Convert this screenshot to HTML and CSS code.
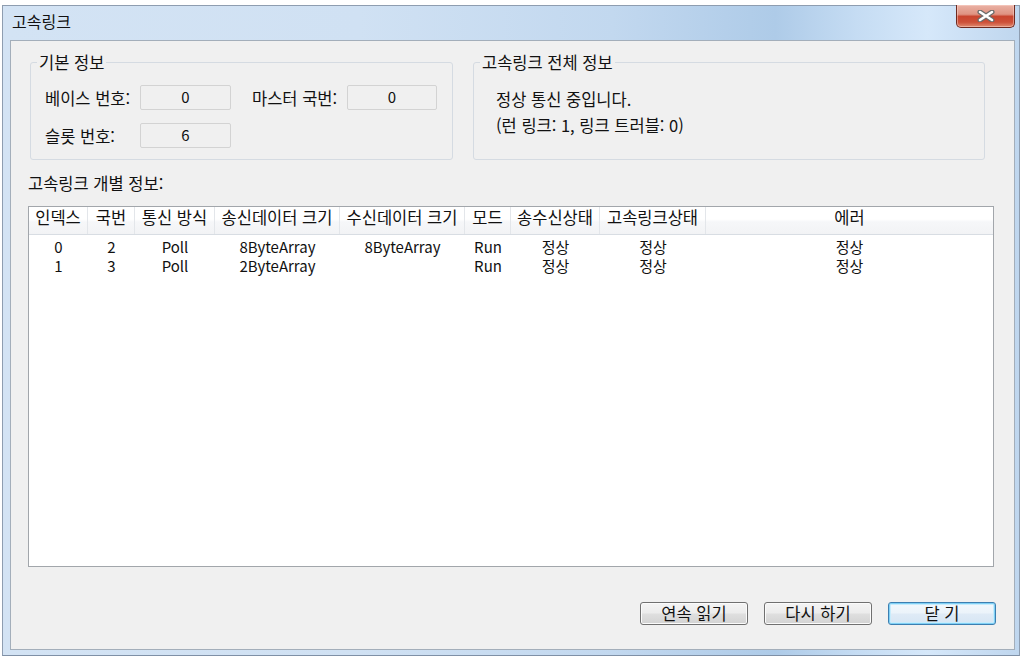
FILE: index.html
```html
<!DOCTYPE html>
<html lang="ko">
<head>
<meta charset="utf-8">
<title>고속링크</title>
<link rel="stylesheet" href="styles.css">
</head>
<body>
<div class="window">
  <div class="titlebar">
    <span class="title">고속링크</span>
    <button class="close-btn" aria-label="닫기">
      <svg width="18" height="12" viewBox="0 0 18 12">
        <path d="M3 2 L15 10 M15 2 L3 10" stroke="#6b6b6b" stroke-width="5" stroke-linecap="round" fill="none"/>
        <path d="M3 2 L15 10 M15 2 L3 10" stroke="#ffffff" stroke-width="2.6" stroke-linecap="round" fill="none"/>
      </svg>
    </button>
  </div>
  <div class="client">
    <div class="groups">
      <fieldset class="group group-basic">
        <legend>기본 정보</legend>
        <div class="group-body basic-body">
          <div class="field-row">
            <span class="label">베이스 번호:</span><span class="value">0</span>
            <span class="label label-2">마스터 국번:</span><span class="value value-2">0</span>
          </div>
          <div class="field-row">
            <span class="label">슬롯 번호:</span><span class="value">6</span>
          </div>
        </div>
      </fieldset>
      <fieldset class="group group-status">
        <legend>고속링크 전체 정보</legend>
        <div class="group-body status-body">
          <p class="status-line">정상 통신 중입니다.</p>
          <p class="status-line">(런 링크: 1, 링크 트러블: 0)</p>
        </div>
      </fieldset>
    </div>

    <div class="section-label">고속링크 개별 정보:</div>

    <div class="listview">
      <div class="lv-header">
        <div class="lv-hcell">인덱스</div>
        <div class="lv-hcell">국번</div>
        <div class="lv-hcell">통신 방식</div>
        <div class="lv-hcell">송신데이터 크기</div>
        <div class="lv-hcell">수신데이터 크기</div>
        <div class="lv-hcell">모드</div>
        <div class="lv-hcell">송수신상태</div>
        <div class="lv-hcell">고속링크상태</div>
        <div class="lv-hcell">에러</div>
      </div>
      <div class="lv-body">
        <div class="lv-row">
          <div class="lv-cell">0</div>
          <div class="lv-cell">2</div>
          <div class="lv-cell">Poll</div>
          <div class="lv-cell">8ByteArray</div>
          <div class="lv-cell">8ByteArray</div>
          <div class="lv-cell">Run</div>
          <div class="lv-cell">정상</div>
          <div class="lv-cell">정상</div>
          <div class="lv-cell">정상</div>
        </div>
        <div class="lv-row">
          <div class="lv-cell">1</div>
          <div class="lv-cell">3</div>
          <div class="lv-cell">Poll</div>
          <div class="lv-cell">2ByteArray</div>
          <div class="lv-cell"></div>
          <div class="lv-cell">Run</div>
          <div class="lv-cell">정상</div>
          <div class="lv-cell">정상</div>
          <div class="lv-cell">정상</div>
        </div>
      </div>
    </div>

    <div class="buttons">
      <button class="btn">연속 읽기</button>
      <button class="btn">다시 하기</button>
      <button class="btn btn-default">닫 기</button>
    </div>
  </div>
</div>
</body>
</html>
```

FILE: styles.css
```css
* {
  box-sizing: border-box;
}

html, body {
  margin: 0;
  padding: 0;
  background: #ffffff;
}

body {
  font-family: "Noto Sans CJK KR", "Noto Sans", sans-serif;
  font-size: 16.5px;
  color: #111;
  width: 1025px;
  height: 659px;
  overflow: hidden;
}

.window {
  margin: 5px 0 0 2px;
  width: 1018px;
  height: 651px;
  border: 1px solid #8e9db0;
  border-bottom-color: #7f90a6;
  background: linear-gradient(90deg, #d3e3f4 0%, #d0e1f3 35%, #c2d8ef 60%, #aecbe8 76%, #c5dcf3 84%, #d6e8fa 91%, #bfd6ee 100%);
  display: flex;
  flex-direction: column;
  padding: 0 4px 5px 7px;
}

.titlebar {
  height: 34px;
  display: flex;
  align-items: flex-start;
  flex: none;
}

.title {
  margin-top: 5px;
  margin-left: 2px;
  line-height: 20px;
  font-size: 16px;
}

.close-btn {
  margin-left: auto;
  margin-right: 0;
  margin-top: -1px;
  width: 59px;
  height: 23px;
  padding: 0;
  border: 1px solid #6e2a20;
  border-top: none;
  border-radius: 0 0 5px 5px;
  background: linear-gradient(180deg, #eab2a5 0%, #df9382 42%, #c9452f 52%, #cd5038 78%, #e08b70 100%);
  box-shadow: inset 0 0 0 1px rgba(255, 220, 210, 0.45);
  display: flex;
  align-items: center;
  justify-content: center;
}

.close-btn svg {
  display: block;
}

.client {
  flex: 1;
  border: 1px solid #a3aeba;
  background: #f0f0f0;
  display: flex;
  flex-direction: column;
  padding: 12px 20px 24px 17px;
}

.groups {
  display: flex;
  gap: 20px;
  margin-left: 2px;
  flex: none;
}

.group {
  margin: 0;
  padding: 0;
  min-width: 0;
  border: 1px solid #d5dbe2;
  border-radius: 3px;
}

.group legend {
  margin-left: 6px;
  padding: 0 2px;
  line-height: 18px;
}

.group-basic {
  width: 423px;
}

.group-status {
  width: 512px;
}

.basic-body {
  padding: 14px 0 11px 14px;
  display: flex;
  flex-direction: column;
  gap: 13px;
}

.field-row {
  display: flex;
  align-items: center;
}

.label {
  width: 95px;
  line-height: 20px;
  white-space: nowrap;
}

.label-2 {
  margin-left: 21px;
}

.value {
  width: 91px;
  height: 25px;
  border: 1px solid #d3d3d3;
  border-radius: 2px;
  background: #f0f0f0;
  text-align: center;
  font-size: 15px;
  line-height: 21px;
  padding-bottom: 2px;
}

.value-2 {
  width: 90px;
}

.status-body {
  padding: 15px 0 0 22px;
}

.status-line {
  margin: 0;
  line-height: 26px;
}

.section-label {
  margin-top: 14px;
  line-height: 18px;
  flex: none;
}

.listview {
  margin-top: 14px;
  flex: 1;
  border: 1px solid #a2a6ab;
  background: #ffffff;
  display: flex;
  flex-direction: column;
  --cols: 59px 47px 80px 125px 125px 46px 89px 106px 1fr;
}

.lv-header {
  display: grid;
  grid-template-columns: var(--cols);
  border-bottom: 1px solid #d8dde3;
  background: linear-gradient(180deg, #ffffff 0%, #ffffff 45%, #f6f7f9 55%, #f2f3f5 100%);
}

.lv-hcell {
  text-align: center;
  line-height: 21px;
  padding-bottom: 6px;
  border-right: 1px solid #e3e6ea;
  white-space: nowrap;
}

.lv-hcell:last-child {
  border-right: none;
}

.lv-body {
  padding-top: 2px;
}

.lv-row {
  display: grid;
  grid-template-columns: var(--cols);
}

.lv-cell {
  text-align: center;
  font-size: 15px;
  line-height: 19px;
  white-space: nowrap;
}

.buttons {
  margin-top: 35px;
  margin-right: -2px;
  display: flex;
  justify-content: flex-end;
  gap: 16px;
  flex: none;
}

.btn {
  width: 108px;
  height: 23px;
  padding: 0;
  font-family: "Noto Sans CJK KR", "Noto Sans", sans-serif;
  font-size: 16.5px;
  line-height: 19px;
  color: #111;
  border: 1px solid #707070;
  border-radius: 3px;
  background: linear-gradient(180deg, #f4f4f4 0%, #ececec 48%, #dfdfdf 52%, #d3d3d3 100%);
  box-shadow: inset 0 0 0 1px #fbfbfb;
}

.btn-default {
  border-color: #3c7fb1;
  background: linear-gradient(180deg, #f3f8fc 0%, #ebf3fa 48%, #dfebf6 52%, #d6e6f4 100%);
  box-shadow: inset 0 0 0 1px #7fd0f5, inset 0 0 0 2px #c8ecfc;
}
```
